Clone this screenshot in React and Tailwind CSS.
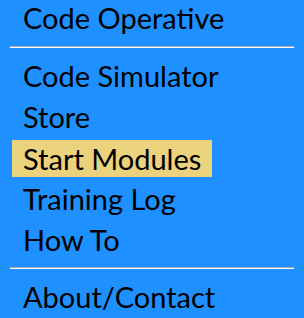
import React from 'react';

const items = ['Code Simulator', 'Store', 'Start Modules', 'Training Log', 'How To'];

const Divider = ({ className }) => (
  <div className={`mx-[10px] h-[2px] border-t border-t-[#a9a9a9] border-b border-b-white ${className}`} />
);

const App = () => {
  return (
    <div
      className="w-[304px] h-[318px] overflow-hidden bg-[#1e90ff] text-black text-[29px]"
      style={{ fontFamily: 'Lato, "Liberation Sans", sans-serif' }}
    >
      <div className="h-[36px] leading-[36px] pl-[23px]">Code Operative</div>
      <Divider className="mt-[10px]" />
      <div className="mt-[6px]">
        {items.map(item => (
          <div key={item} className="h-[41px] pl-[12px]">
            {item === 'Start Modules' ? (
              <span className="inline-block mt-[4px] h-[37px] leading-[37px] px-[11px] bg-[#ebd27d]">
                {item}
              </span>
            ) : (
              <span className="inline-block leading-[41px] pl-[11px]">{item}</span>
            )}
          </div>
        ))}
      </div>
      <Divider className="mt-[8px]" />
      <div className="mt-[7px] h-[41px] leading-[41px] pl-[23px]">About/Contact</div>
    </div>
  );
};

export default App;
